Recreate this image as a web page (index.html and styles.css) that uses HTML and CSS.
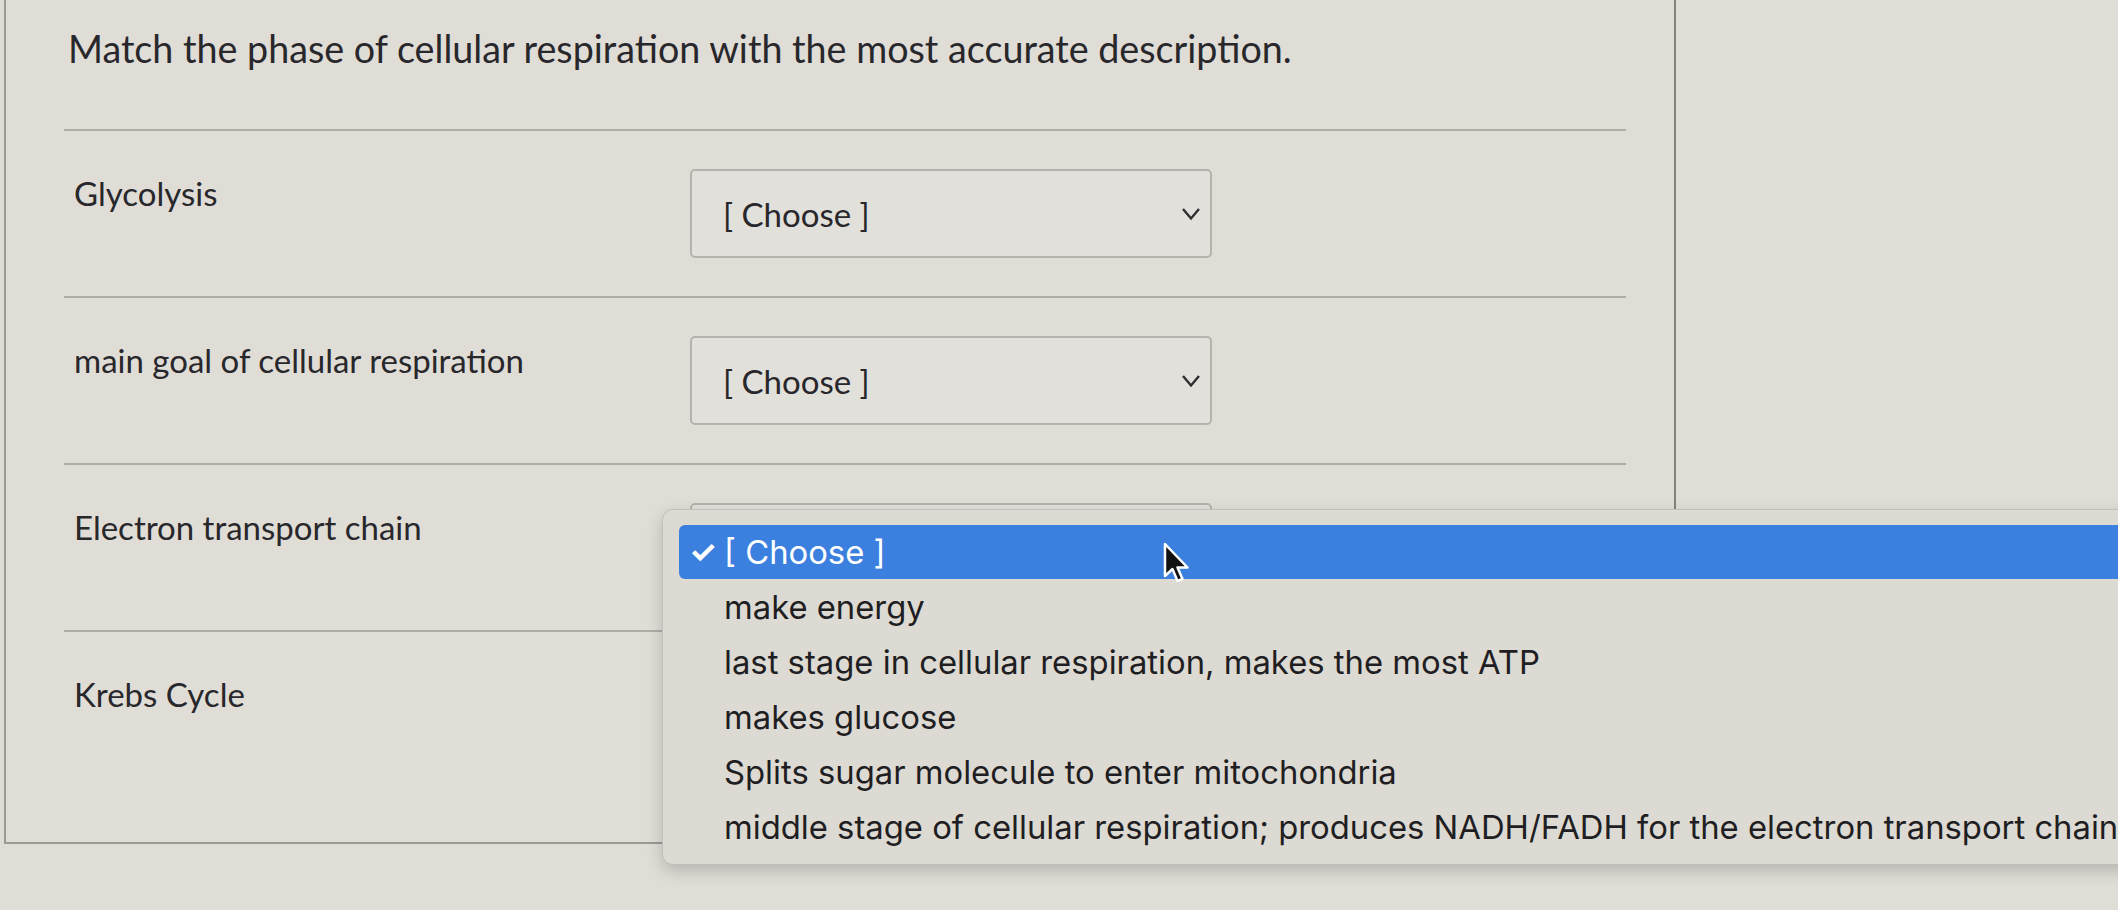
FILE: index.html
```html
<!DOCTYPE html>
<html lang="en">
<head>
    <meta charset="UTF-8">
    <meta name="viewport" content="width=device-width, initial-scale=1.0">
    <title>Quiz - Matching</title>
    <link rel="stylesheet" href="styles.css">
</head>
<body>
    <div class="panel">
        <div class="question-text">Match the phase of cellular respiration with the most accurate description.</div>

        <div class="answers">
            <div class="row">
                <div class="label">Glycolysis</div>
                <div class="select">
                    <span>[ Choose ]</span>
                    <svg class="chevron" width="22" height="16" viewBox="0 0 22 16"><polyline points="3,3 11,12.5 19,3" /></svg>
                </div>
            </div>
            <div class="row">
                <div class="label">main goal of cellular respiration</div>
                <div class="select">
                    <span>[ Choose ]</span>
                    <svg class="chevron" width="22" height="16" viewBox="0 0 22 16"><polyline points="3,3 11,12.5 19,3" /></svg>
                </div>
            </div>
            <div class="row">
                <div class="label">Electron transport chain</div>
                <!-- covered by the open popup -->
                <div class="select"></div>
            </div>
            <div class="row last">
                <div class="label">Krebs Cycle</div>
                <div class="select"></div>
            </div>
        </div>
    </div>

    <!-- open popup of the "Electron transport chain" select -->
    <ul class="menu">
        <li class="selected"><span class="check">✓</span>[ Choose ]</li>
        <li>make energy</li>
        <li>last stage in cellular respiration, makes the most ATP</li>
        <li>makes glucose</li>
        <li>Splits sugar molecule to enter mitochondria</li>
        <li>middle stage of cellular respiration; produces NADH/FADH for the electron transport chain</li>
    </ul>

    <svg class="cursor" width="30" height="44" viewBox="0 0 30 44">
        <path d="M2 2 L2 34 L9.5 27 L14.5 39 L19.5 37 L14.5 25.5 L24.5 25.5 Z" fill="#111" stroke="#fff" stroke-width="2.5" stroke-linejoin="round" />
    </svg>
</body>
</html>
```

FILE: styles.css
```css
body {
    margin: 0;
    height: 910px;
    overflow: hidden;
    background-color: #dfddd6;
    color: #28272b;
    font-family: Lato, "Open Sans", sans-serif;
}
.panel {
    width: 1672px;
    height: 844px;
    margin-left: 4px;
    box-sizing: border-box;
    border-left: 2px solid #9a9994;
    border-right: 2px solid #83827e;
    border-bottom: 2px solid #9a9994;
}
.question-text {
    font-size: 37.7px;
    line-height: 44px;
    padding: 27px 0 0 62px;
    height: 102px;
}
.answers {
    margin: 0 48px 0 58px;
}
.row {
    display: flex;
    border-top: 2px solid #aeaca7;
    padding: 38px 0;
}
.row.last {
    padding-bottom: 91px;
}
.label {
    width: 616px;
    padding-left: 10px;
    margin-top: 4px;
    font-size: 33px;
    line-height: 40px;
}
.select {
    width: 522px;
    height: 89px;
    box-sizing: border-box;
    border: 2px solid #b5b3ad;
    border-radius: 5px;
    background-color: #e2e0da;
    display: flex;
    align-items: center;
    justify-content: space-between;
    padding: 0 8px 0 31px;
    font-size: 33px;
}
.chevron polyline {
    fill: none;
    stroke: #2f2e31;
    stroke-width: 2.4;
}
.menu {
    position: absolute;
    left: 662px;
    top: 509px;
    width: 1520px;
    height: 356px;
    margin: 0;
    padding: 15px 0 0 16px;
    box-sizing: border-box;
    list-style: none;
    background-color: #dcdad3;
    border: 1px solid #c2c0ba;
    border-radius: 11px;
    box-shadow: 0 6px 16px rgba(0, 0, 0, 0.18);
    font-family: Inter, "Liberation Sans", sans-serif;
    font-size: 32.8px;
    color: #1f1e22;
}
.menu li {
    height: 55px;
    line-height: 55px;
    padding-left: 45px;
    white-space: nowrap;
}
.menu li.selected {
    height: 54px;
    line-height: 54px;
    margin-bottom: 1px;
    background-color: #3b80de;
    color: #fff;
    border-radius: 6px 0 0 6px;
    position: relative;
}
.menu .check {
    position: absolute;
    left: 10px;
    font-size: 31px;
    font-weight: bold;
}
.cursor {
    position: absolute;
    left: 1163px;
    top: 542px;
}
```
